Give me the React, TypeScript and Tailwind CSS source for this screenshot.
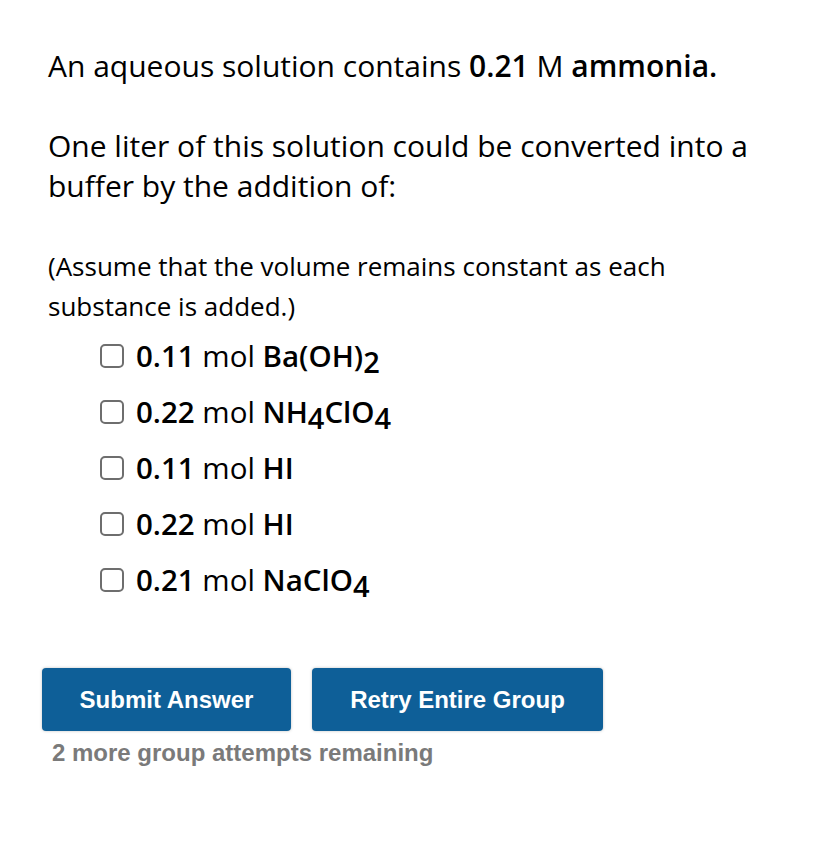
const Sub = ({ children }: { children: React.ReactNode }) => (
  <sub className="text-[29px] relative top-[6px] align-baseline">{children}</sub>
);

const options: { amount: string; formula: React.ReactNode }[] = [
  { amount: "0.11", formula: <>Ba(OH)<Sub>2</Sub></> },
  { amount: "0.22", formula: <>NH<Sub>4</Sub>ClO<Sub>4</Sub></> },
  { amount: "0.11", formula: <>HI</> },
  { amount: "0.22", formula: <>HI</> },
  { amount: "0.21", formula: <>NaClO<Sub>4</Sub></> },
];

export default function App() {
  return (
    <div className="w-[830px] h-[842px] bg-white text-black font-['Open_Sans',sans-serif]">
      <div className="pl-[48px] pt-[46px]">
        <p className="text-[30px] leading-[40px]">
          An aqueous solution contains <b className="font-semibold">0.21</b> M{" "}
          <b className="font-semibold">ammonia.</b>
        </p>
        <p className="text-[30px] leading-[40px] mt-[40px] w-[720px]">
          One liter of this solution could be converted into a buffer by the addition of:
        </p>
        <p className="text-[26px] leading-[40px] mt-[40px] w-[660px]">
          (Assume that the volume remains constant as each substance is added.)
        </p>
        <div className="pl-[52px] mt-[2px] flex flex-col">
          {options.map((o, i) => (
            <label key={i} className="flex items-center gap-[12px] h-[56px] text-[29.5px]">
              <span className="w-[24px] h-[24px] rounded-[5px] border-2 border-[#6e6e6e] bg-white shrink-0" />
              <span>
                <b className="font-semibold">{o.amount}</b> mol{" "}
                <b className="font-semibold">{o.formula}</b>
              </span>
            </label>
          ))}
        </div>
      </div>
      <div className="pl-[42px] mt-[60px]">
        <div className="flex gap-[21px]">
          <button className="w-[249px] h-[63px] rounded-[4px] bg-[#0e5f98] text-white font-['Liberation_Sans',Arial,sans-serif] font-bold text-[24px] shadow-[0_0_3px_rgba(0,0,0,0.25)]">
            Submit Answer
          </button>
          <button className="w-[291px] h-[63px] rounded-[4px] bg-[#0e5f98] text-white font-['Liberation_Sans',Arial,sans-serif] font-bold text-[24px] shadow-[0_0_3px_rgba(0,0,0,0.25)]">
            Retry Entire Group
          </button>
        </div>
        <p className="pl-[10px] mt-[4px] text-[24px] font-bold text-[#7a7a7a] font-['Liberation_Sans',Arial,sans-serif]">
          2 more group attempts remaining
        </p>
      </div>
    </div>
  );
}
